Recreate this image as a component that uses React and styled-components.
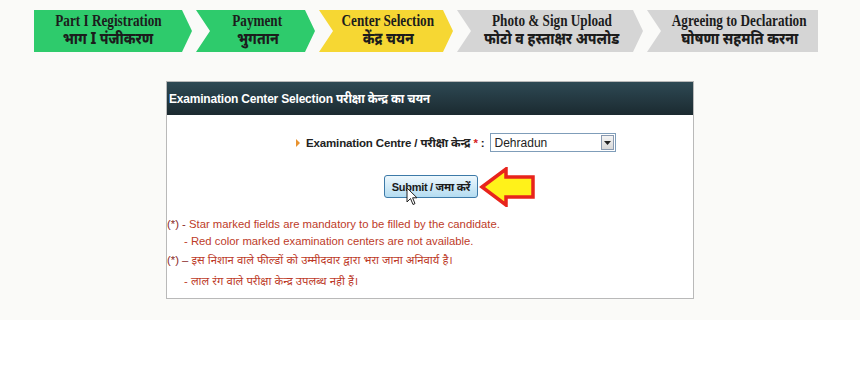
import styled, { createGlobalStyle } from "styled-components";

const GlobalStyle = createGlobalStyle`
  body {
    margin: 0;
    background: #ffffff;
    font-family: "Liberation Sans", "Noto Sans", "Noto Sans Devanagari", sans-serif;
  }
`;

const steps = [
    { en: "Part I Registration", hi: "भाग I पंजीकरण", bg: "#2ecb6c", w: 158 },
    { en: "Payment", hi: "भुगतान", bg: "#2ecb6c", w: 119 },
    { en: "Center Selection", hi: "केंद्र चयन", bg: "#f6d733", w: 134 },
    { en: "Photo & Sign Upload", hi: "फोटो व हस्ताक्षर अपलोड", bg: "#d5d5d5", w: 186 },
    { en: "Agreeing to Declaration", hi: "घोषणा सहमति करना", bg: "#d5d5d5", w: 171 },
];

const notes = [
    { mark: "(*) - ", text: "Star marked fields are mandatory to be filled by the candidate.", hindi: false },
    { mark: "", text: "- Red color marked examination centers are not available.", hindi: false },
    { mark: "(*) – ", text: "इस निशान वाले फील्डों को उम्मीदवार द्वारा भरा जाना अनिवार्य है।", hindi: true },
    { mark: "", text: "- लाल रंग वाले परीक्षा केन्द्र उपलब्ध नही हैं।", hindi: true },
];

const App = () => {
    return (
        <>
            <GlobalStyle />
            <Screen>
                <StepBar>
                    {steps.map((s, i) => (
                        <Step key={s.en} $bg={s.bg} $w={s.w} $first={i === 0} $last={i === steps.length - 1}>
                            <StepEn>{s.en}</StepEn>
                            <StepHi>{s.hi}</StepHi>
                        </Step>
                    ))}
                </StepBar>
                <Panel>
                    <PanelHead>Examination Center Selection परीक्षा केन्द्र का चयन</PanelHead>
                    <PanelBody>
                        <FieldRow>
                            <Bullet />
                            <Label>
                                Examination Centre / परीक्षा केन्द्र <Star>*</Star> :
                            </Label>
                            <Select>
                                <span>Dehradun</span>
                                <DropBtn>
                                    <svg width="7" height="4" viewBox="0 0 7 4">
                                        <path d="M0 0 H7 L3.5 4 Z" fill="#222" />
                                    </svg>
                                </DropBtn>
                            </Select>
                        </FieldRow>
                        <ButtonRow>
                            <SubmitButton>Submit / जमा करें</SubmitButton>
                            <Cursor width="12" height="19" viewBox="0 0 12 19">
                                <path d="M1 1 L1 15 L4.5 11.5 L7 17.5 L9 16.6 L6.6 10.8 L11 10.8 Z" fill="#fff" stroke="#222" strokeWidth="1" strokeLinejoin="round" />
                            </Cursor>
                            <PointerArrow width="58" height="40" viewBox="0 0 58 40">
                                <path d="M3 20 L27 2 L27 10 L54 10 L54 30 L27 30 L27 38 Z" fill="#fff21a" stroke="#e8241c" strokeWidth="3.5" strokeLinejoin="miter" />
                            </PointerArrow>
                        </ButtonRow>
                        <Notes>
                            {notes.map((n) => (
                                <Note key={n.text} $indent={!n.mark} $hindi={n.hindi}>
                                    {n.mark && <Mark>{n.mark}</Mark>}
                                    {n.text}
                                </Note>
                            ))}
                        </Notes>
                    </PanelBody>
                </Panel>
            </Screen>
        </>
    );
}

const Screen = styled.div`
    height: 320px;
    background: #fafaf8;
    padding-top: 10px;
    box-sizing: border-box;
`;

const StepBar = styled.div`
    display: flex;
    gap: 4px;
    padding-left: 34px;
`;

const Step = styled.div`
    width: ${(p) => p.$w}px;
    height: 42px;
    box-sizing: border-box;
    background: ${(p) => p.$bg};
    display: flex;
    flex-direction: column;
    align-items: center;
    justify-content: center;
    padding-left: ${(p) => (p.$first ? 0 : 14)}px;
    padding-right: ${(p) => (p.$last ? 0 : 10)}px;
    clip-path: ${(p) =>
        p.$first
            ? "polygon(0 0, calc(100% - 10px) 0, 100% 50%, calc(100% - 10px) 100%, 0 100%)"
            : p.$last
            ? "polygon(0 0, 100% 0, 100% 100%, 0 100%, 14px 50%)"
            : "polygon(0 0, calc(100% - 10px) 0, 100% 50%, calc(100% - 10px) 100%, 0 100%, 14px 50%)"};
    color: #1c1c1c;
`;

const StepEn = styled.div`
    font-family: "Liberation Serif", serif;
    font-weight: 700;
    font-size: 16.5px;
    line-height: 18px;
    white-space: nowrap;
    transform: scaleX(0.8);
`;

const StepHi = styled.div`
    font-family: "Noto Sans Devanagari", "Noto Sans", "Liberation Serif", serif;
    font-weight: 800;
    font-size: 16.5px;
    line-height: 21px;
    white-space: nowrap;
    transform: scaleX(0.84);
`;

const Panel = styled.div`
    width: 528px;
    margin: 29px auto 0;
    box-sizing: border-box;
    border: 1px solid #b9b9b9;
    background: #ffffff;
    height: 218px;
`;

const PanelHead = styled.div`
    height: 33px;
    display: flex;
    align-items: center;
    padding-left: 2px;
    background: linear-gradient(#2e4954, #1b2a30);
    color: #ffffff;
    font-size: 12px;
    font-weight: 700;
    letter-spacing: -0.2px;
    white-space: nowrap;
`;

const PanelBody = styled.div`
    display: flex;
    flex-direction: column;
`;

const FieldRow = styled.div`
    display: flex;
    align-items: center;
    padding: 18px 0 0 129px;
    height: 19px;
`;

const Bullet = styled.span`
    width: 0;
    height: 0;
    border-top: 4px solid transparent;
    border-bottom: 4px solid transparent;
    border-left: 4px solid #e8922e;
    margin-right: 6px;
`;

const Label = styled.span`
    font-size: 11.5px;
    font-weight: 700;
    letter-spacing: -0.15px;
    color: #222;
    white-space: nowrap;
    margin-right: 5px;
`;

const Star = styled.span`
    color: #d42020;
`;

const Select = styled.div`
    width: 126px;
    height: 19px;
    box-sizing: border-box;
    border: 1px solid #7f9db9;
    display: flex;
    align-items: center;
    justify-content: space-between;
    padding-left: 4px;
    font-size: 12px;
    color: #222;
    background: #fff;
`;

const DropBtn = styled.span`
    width: 13px;
    height: 15px;
    margin-right: 1px;
    border: 1px solid #8a9ab0;
    box-sizing: border-box;
    background: linear-gradient(#f4f4f4, #d8d8d8);
    display: flex;
    align-items: center;
    justify-content: center;
`;

const ButtonRow = styled.div`
    position: relative;
    display: flex;
    justify-content: center;
    padding-top: 23px;
    padding-left: 2px;
`;

const SubmitButton = styled.button`
    width: 94px;
    height: 23px;
    border: 1px solid #3d7aa8;
    border-radius: 3px;
    background: linear-gradient(#eef8fd, #b4dcf1);
    font-family: "Liberation Sans", "Noto Sans", sans-serif;
    font-size: 11px;
    font-weight: 700;
    letter-spacing: -0.3px;
    color: #1a1a1a;
    padding: 0;
    white-space: nowrap;
`;

const Cursor = styled.svg`
    position: absolute;
    left: 239px;
    top: 35px;
`;

const PointerArrow = styled.svg`
    position: absolute;
    left: 312px;
    top: 15px;
`;

const Notes = styled.div`
    display: flex;
    flex-direction: column;
    padding-top: 18px;
    color: #bd3b29;
    font-size: 11.3px;
`;

const Note = styled.div`
    height: ${(p) => (p.$hindi ? 21 : 17)}px;
    line-height: ${(p) => (p.$hindi ? 21 : 17)}px;
    padding-left: ${(p) => (p.$indent ? 17 : 0)}px;
    white-space: nowrap;
`;

const Mark = styled.span`
    color: #8a2a2a;
`;

export default App;
